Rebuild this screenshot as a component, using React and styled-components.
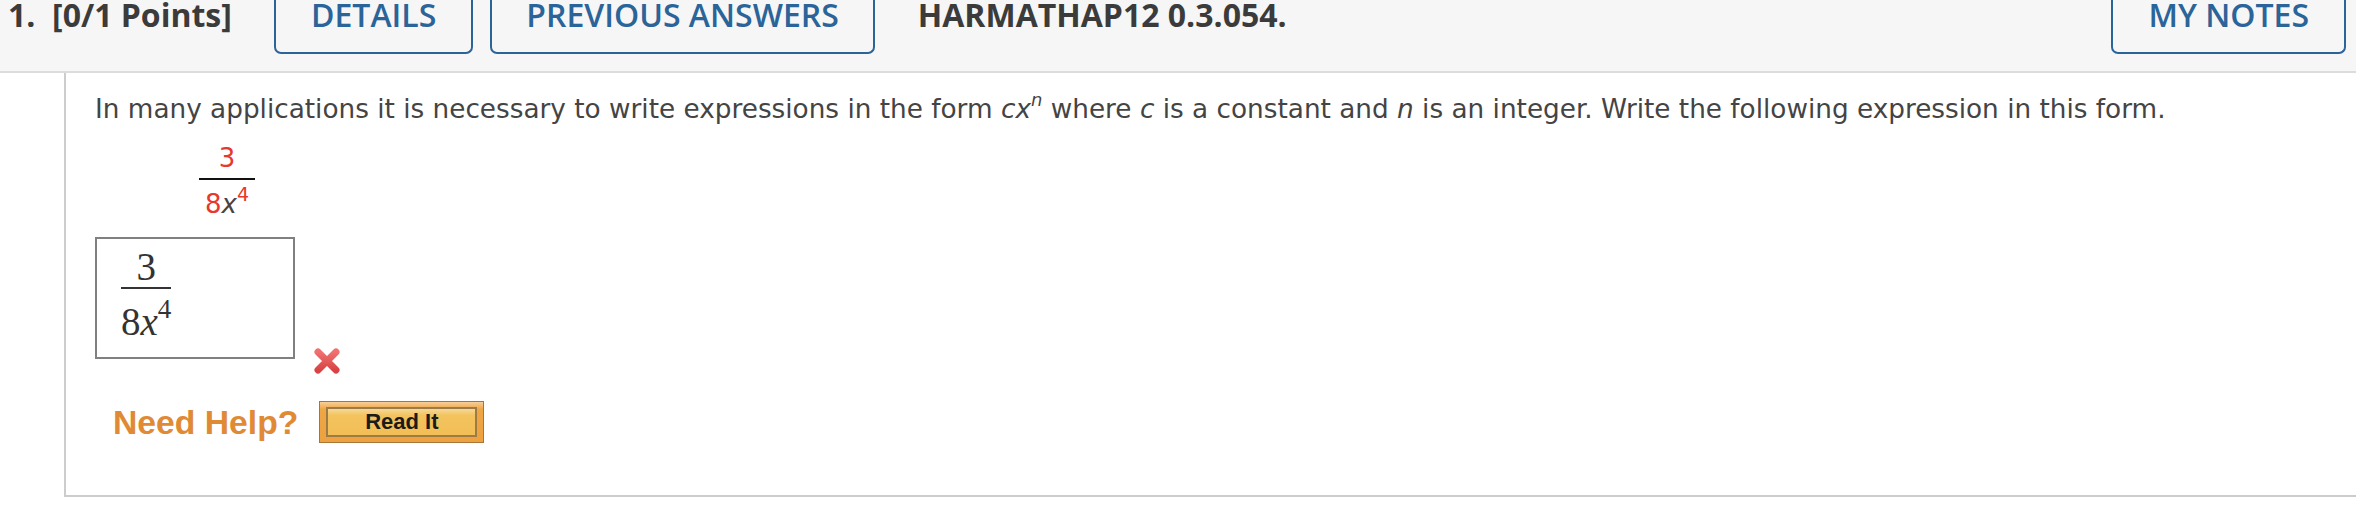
import React from 'react';
import styled, { createGlobalStyle } from 'styled-components';

const GlobalStyle = createGlobalStyle`
  html, body {
    margin: 0;
    padding: 0;
    background: #ffffff;
  }
`;

const Page = styled.div`
  width: 2356px;
  font-family: "DejaVu Sans", Verdana, sans-serif;
`;

const Header = styled.div`
  display: flex;
  align-items: flex-start;
  height: 71px;
  background: #f6f6f6;
  border-bottom: 2px solid #dcdcdc;
  font-family: "Open Sans", "DejaVu Sans", sans-serif;
  font-size: 32px;
  line-height: 29px;
`;

const QuestionLabel = styled.div`
  box-sizing: border-box;
  width: 274px;
  padding-left: 8px;
  font-weight: 700;
  color: #3b3b3b;
  white-space: pre;
`;

const TabButton = styled.div`
  box-sizing: border-box;
  height: 54px;
  padding: 0 ${p => p.$pad || 35}px;
  margin-left: ${p => (p.$push ? 'auto' : '0')};
  margin-right: ${p => (p.$push ? '10px' : '17px')};
  border: 2px solid #2b6499;
  border-top: none;
  border-radius: 0 0 7px 7px;
  color: #2b6499;
  font-weight: 600;
  white-space: nowrap;
`;

const QuestionCode = styled.div`
  margin-left: 26px;
  font-weight: 700;
  color: #3b3b3b;
  white-space: nowrap;
`;

const Panel = styled.div`
  margin-left: 64px;
  padding: 21px 0 52px 29px;
  border-left: 2px solid #cccccc;
  border-bottom: 2px solid #cccccc;
  color: #444444;
`;

const Prompt = styled.p`
  margin: 0;
  font-size: 26.3px;
  line-height: 30px;
  white-space: nowrap;
`;

const Var = styled.i`
  font-style: italic;
`;

const Sup = styled.sup`
  font-size: ${p => p.$size || 18}px;
  line-height: 0;
  vertical-align: ${p => p.$raise || 12}px;
  color: ${p => p.$color || 'inherit'};
`;

const Red = styled.span`
  color: #e8372c;
`;

const Fraction = styled.div`
  display: inline-flex;
  flex-direction: column;
  align-items: stretch;
  margin: 19px 0 0 104px;
  font-size: 26px;
  line-height: 30px;
  text-align: center;
`;

const FracBar = styled.div`
  height: 2px;
  margin: ${p => p.$gap || '5px 0 9px'};
  background: ${p => p.$color || '#111111'};
`;

const FracPart = styled.div`
  padding: 0 ${p => p.$pad || 0}px;
  white-space: nowrap;
`;

const AnswerRow = styled.div`
  display: flex;
  align-items: flex-start;
  gap: 18px;
  margin-top: 18px;
`;

const AnswerBox = styled.div`
  box-sizing: border-box;
  width: 200px;
  height: 122px;
  padding: 8px 0 0 24px;
  border: 2px solid #808080;
  background: #ffffff;
`;

const MathFraction = styled.div`
  display: inline-flex;
  flex-direction: column;
  align-items: stretch;
  font-family: "Liberation Serif", "Times New Roman", serif;
  font-size: 39px;
  line-height: 40px;
  color: #333333;
  text-align: center;
`;

const WrongMark = styled.svg`
  display: block;
  margin-top: 111px;
  flex: none;
`;

const HelpRow = styled.div`
  display: flex;
  align-items: center;
  gap: 21px;
  margin: 27px 0 0 18px;
`;

const HelpLabel = styled.span`
  font-family: "Liberation Sans", Arial, sans-serif;
  font-weight: 700;
  font-size: 33.7px;
  line-height: 42px;
  color: #e08a35;
`;

const ReadItButton = styled.div`
  box-sizing: border-box;
  width: 165px;
  height: 42px;
  padding: 5px 6px;
  border: 1px solid #a87538;
  background: linear-gradient(#f7cf98 0, #efa645 18%, #eda141 100%);
`;

const ReadItFace = styled.div`
  box-sizing: border-box;
  height: 100%;
  display: flex;
  align-items: center;
  justify-content: center;
  border: 2px solid #9d7b47;
  background: linear-gradient(#f7d898 0, #f3c35e 25%, #f2be56 100%);
  font-family: "Liberation Sans", Arial, sans-serif;
  font-weight: 700;
  font-size: 22px;
  line-height: 22px;
  color: #1b1b1b;
`;

function App() {
  return (
    <Page>
      <GlobalStyle />
      <Header>
        <QuestionLabel>{'1.  [0/1 Points]'}</QuestionLabel>
        <TabButton>DETAILS</TabButton>
        <TabButton $pad={34}>PREVIOUS ANSWERS</TabButton>
        <QuestionCode>HARMATHAP12 0.3.054.</QuestionCode>
        <TabButton $push>MY NOTES</TabButton>
      </Header>

      <Panel>
        <Prompt>
          In many applications it is necessary to write expressions in the form{' '}
          <Var>cx</Var>
          <Sup>
            <Var>n</Var>
          </Sup>{' '}
          where <Var>c</Var> is a constant and <Var>n</Var> is an integer. Write the following
          expression in this form.
        </Prompt>

        <Fraction>
          <FracPart $pad={7}>
            <Red>3</Red>
          </FracPart>
          <FracBar />
          <FracPart $pad={6}>
            <Red>8</Red>
            <Var>x</Var>
            <Sup $size={19} $color="#e8372c">4</Sup>
          </FracPart>
        </Fraction>

        <AnswerRow>
          <AnswerBox>
            <MathFraction>
              <FracPart>3</FracPart>
              <FracBar $gap="0 0 13px" $color="#333333" />
              <FracPart>
                8<Var>x</Var>
                <Sup $size={27} $raise={17}>4</Sup>
              </FracPart>
            </MathFraction>
          </AnswerBox>
          <WrongMark width="28" height="26" viewBox="0 0 28 26">
            <defs>
              <linearGradient id="xg" x1="0" y1="0" x2="0" y2="1">
                <stop offset="0" stopColor="#f07070" />
                <stop offset="1" stopColor="#d84444" />
              </linearGradient>
            </defs>
            <path
              d="M5 4 L23 22 M23 4 L5 22"
              stroke="url(#xg)"
              strokeWidth="7"
              strokeLinecap="round"
              fill="none"
            />
          </WrongMark>
        </AnswerRow>

        <HelpRow>
          <HelpLabel>Need Help?</HelpLabel>
          <ReadItButton>
            <ReadItFace>Read It</ReadItFace>
          </ReadItButton>
        </HelpRow>
      </Panel>
    </Page>
  );
}

export default App;
